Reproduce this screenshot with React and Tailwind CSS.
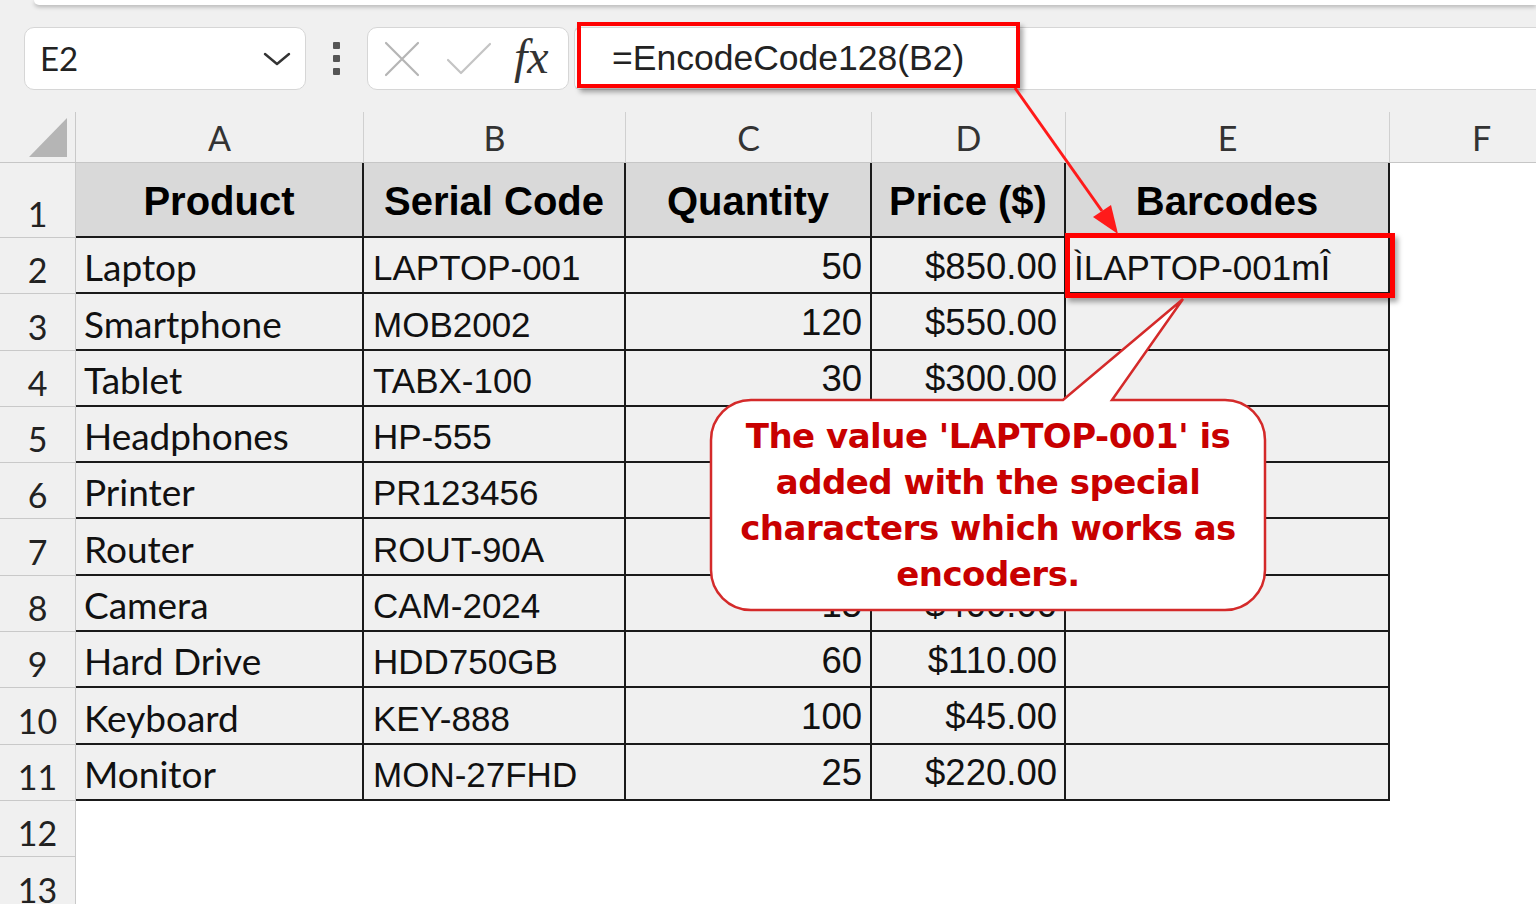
import React from 'react'

const sans = "font-['Liberation_Sans',Arial,sans-serif]"
const lato = "font-['Lato','Noto_Sans',sans-serif]"

const colWidths = ['w-[288px]', 'w-[262px]', 'w-[246px]', 'w-[194px]', 'w-[324px]']
const letters = ['A', 'B', 'C', 'D', 'E']

// rows 5-7 quantities/prices sit under the callout
const rows = [
  ['Laptop', 'LAPTOP-001', '50', '$850.00', 'ÌLAPTOP-001mÎ'],
  ['Smartphone', 'MOB2002', '120', '$550.00', ''],
  ['Tablet', 'TABX-100', '30', '$300.00', ''],
  ['Headphones', 'HP-555', '', '', ''],
  ['Printer', 'PR123456', '', '', ''],
  ['Router', 'ROUT-90A', '', '', ''],
  ['Camera', 'CAM-2024', '15', '$400.00', ''],
  ['Hard Drive', 'HDD750GB', '60', '$110.00', ''],
  ['Keyboard', 'KEY-888', '100', '$45.00', ''],
  ['Monitor', 'MON-27FHD', '25', '$220.00', ''],
]

function RowHead({ n, tall }) {
  return (
    <div className={`w-[76px] shrink-0 ${tall ? 'h-[75px]' : 'h-[56.3px]'} bg-[#f0f0f0] border-b border-r border-[#c9c9c9] flex items-end justify-center pb-[6px] text-[34px] leading-none text-[#222] ${lato}`}>
      {n}
    </div>
  )
}

function FormulaBar() {
  return (
    <div className="h-[107px] flex items-start pt-[17px] pl-[24px]">
      {/* name box */}
      <div className="mt-[5px] w-[282px] h-[63px] bg-white border border-[#d6d6d6] rounded-[10px] flex items-center justify-between pl-[15px] pr-[14px]">
        <span className={`text-[33px] text-[#222] ${lato}`}>E2</span>
        <svg width="28" height="16" viewBox="0 0 28 16" fill="none" stroke="#333" strokeWidth="2.4" strokeLinecap="round" strokeLinejoin="round">
          <path d="M2 3 L14 13 L26 3" />
        </svg>
      </div>
      {/* dots */}
      <div className="mt-[20px] ml-[27px] w-[8px] flex flex-col gap-[6px]">
        <div className="w-[7px] h-[7px] bg-[#555] rounded-[1px]" />
        <div className="w-[7px] h-[7px] bg-[#555] rounded-[1px]" />
        <div className="w-[7px] h-[7px] bg-[#555] rounded-[1px]" />
      </div>
      {/* cancel / enter / fx */}
      <div className="mt-[5px] ml-[26px] w-[202px] h-[63px] bg-white border border-[#d6d6d6] rounded-[10px] flex items-center pl-[16px]">
        <svg width="36" height="36" viewBox="0 0 36 36" fill="none" stroke="#b5b5b5" strokeWidth="2.2" strokeLinecap="round">
          <path d="M2 2 L34 34 M34 2 L2 34" />
        </svg>
        <svg className="ml-[26px]" width="46" height="34" viewBox="0 0 46 34" fill="none" stroke="#c4c4c4" strokeWidth="2.2" strokeLinecap="round" strokeLinejoin="round">
          <path d="M2 18 L15 31 L44 2" />
        </svg>
        <span className="ml-[22px] mb-[4px] text-[48px] leading-none italic text-[#333] font-['Liberation_Serif',serif]">fx</span>
      </div>
      {/* formula input */}
      <div className="mt-[5px] ml-[5px] flex-1 h-[63px] bg-white border border-[#d6d6d6] border-r-0 rounded-l-[6px] flex items-center pl-[37px]">
        <span className={`text-[35.5px] leading-none text-[#222] ${sans}`}>=EncodeCode128(B2)</span>
      </div>
    </div>
  )
}

function ColumnHeaders() {
  return (
    <div className="flex h-[51px] border-b border-[#c6c6c6]">
      <div className="w-[76px] shrink-0 border-r border-[#c9c9c9] flex items-end justify-end pr-[8px] pb-[5px]">
        <svg width="38" height="39" viewBox="0 0 38 39">
          <polygon points="38,0 38,39 0,39" fill="#b5b5b5" />
        </svg>
      </div>
      {letters.map((l, i) => (
        <div key={l} className={`${colWidths[i]} shrink-0 border-r border-[#d0d0d0] flex items-center justify-center text-[34px] text-[#333] ${lato}`}>
          {l}
        </div>
      ))}
      <div className={`flex-1 flex items-center pl-[82px] text-[34px] text-[#333] ${lato}`}>F</div>
    </div>
  )
}

export default function App() {
  const cell = 'shrink-0 border-r-2 border-b-2 border-[#1a1a1a] flex items-end pb-[7px] text-[#111] leading-none'
  return (
    <div className="w-[1536px] h-[904px] overflow-hidden relative bg-[#f0f0f0]">
      <div className="ml-[34px] h-[5px] bg-white rounded-bl-[6px] shadow-[0_2px_4px_rgba(0,0,0,0.25)]" />
      <FormulaBar />
      <ColumnHeaders />

      {/* header row */}
      <div className="flex">
        <RowHead n={1} tall />
        {['Product', 'Serial Code', 'Quantity', 'Price ($)', 'Barcodes'].map((h, i) => (
          <div key={h} className={`${colWidths[i]} h-[75px] shrink-0 bg-[#d9d9d9] border-r-2 border-b-2 border-[#1a1a1a] flex items-center justify-center pt-[2px] text-[40px] font-bold text-black ${sans}`}>
            {h}
          </div>
        ))}
        <div className="flex-1 h-[75px] bg-white" />
      </div>

      {rows.map((r, idx) => (
        <div key={idx} className="flex">
          <RowHead n={idx + 2} />
          <div className={`${colWidths[0]} h-[56.3px] ${cell} pl-[8px] text-[37px] ${lato}`}>{r[0]}</div>
          <div className={`${colWidths[1]} h-[56.3px] ${cell} pl-[9px] text-[35px] ${sans}`}>{r[1]}</div>
          <div className={`${colWidths[2]} h-[56.3px] ${cell} justify-end pr-[8px] text-[36.5px] ${sans}`}>{r[2]}</div>
          <div className={`${colWidths[3]} h-[56.3px] ${cell} justify-end pr-[7px] text-[36.5px] ${sans}`}>{r[3]}</div>
          <div className={`${colWidths[4]} h-[56.3px] ${cell} pl-[8px] text-[35px] ${sans}`}>{r[4]}</div>
          <div className="flex-1 h-[56.3px] bg-white" />
        </div>
      ))}

      {[12, 13].map(n => (
        <div key={n} className="flex">
          <RowHead n={n} />
          <div className="flex-1 h-[56.3px] bg-white" />
        </div>
      ))}

      {/* red highlight: formula */}
      <div className="absolute left-[577px] top-[22px] w-[443px] h-[66px] border-4 border-[#ff0000] shadow-[3px_4px_5px_rgba(0,0,0,0.35)]" />
      {/* red highlight: E2 */}
      <div className="absolute left-[1065px] top-[233px] w-[330px] h-[65px] border-[5px] border-[#ff0000] shadow-[3px_4px_5px_rgba(0,0,0,0.35)]" />

      {/* arrow */}
      <svg className="absolute left-0 top-0 pointer-events-none" width="1536" height="904">
        <line x1="1015" y1="88" x2="1102" y2="211" stroke="#ff1a1a" strokeWidth="3" />
        <polygon points="1118,234 1093,217 1111,205" fill="#ff1a1a" />
      </svg>

      {/* callout */}
      <svg className="absolute left-[700px] top-[290px] pointer-events-none" width="580" height="330" viewBox="0 0 580 330">
        <path
          d="M51,110 H363 L483,9 L412,110 H525 A40,40 0 0 1 565,150 V280 A40,40 0 0 1 525,320 H51 A40,40 0 0 1 11,280 V150 A40,40 0 0 1 51,110 Z"
          fill="white"
          stroke="#d42a2a"
          strokeWidth="2.5"
        />
      </svg>
      <div className="absolute left-[711px] top-[400px] w-[554px] h-[210px] flex flex-col items-center justify-center text-center text-[34px] leading-[46px] font-bold tracking-[-0.5px] text-[#c80000] font-['DejaVu_Sans',sans-serif]">
        <span>The value 'LAPTOP-001' is</span>
        <span>added with the special</span>
        <span>characters which works as</span>
        <span>encoders.</span>
      </div>
    </div>
  )
}
